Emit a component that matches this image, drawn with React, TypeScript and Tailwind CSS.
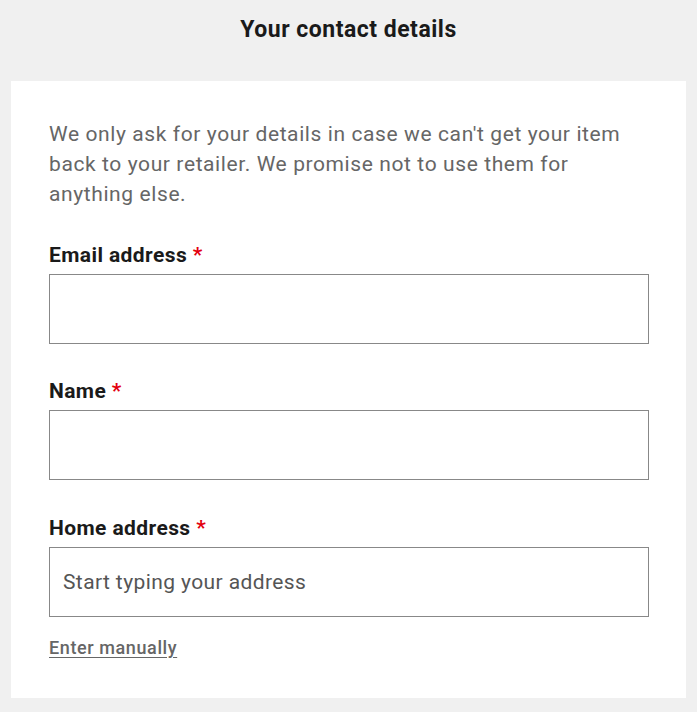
export default function App() {
  // contact form, three required fields
  const fields = [
    { label: "Email address", placeholder: "", gap: "mt-[31px]" },
    { label: "Name", placeholder: "", gap: "mt-[32px]" },
    { label: "Home address", placeholder: "Start typing your address", gap: "mt-[33px]" },
  ];

  return (
    <div
      className="min-h-screen bg-[#f0f0f0] px-[11px] pb-[14px]"
      style={{ fontFamily: "Roboto, 'Noto Sans', sans-serif" }}
    >
      <h1 className="h-[81px] pt-[16px] text-center text-[23px] font-bold leading-[28px] tracking-[0.5px] text-[#1a1a1a]">
        Your contact details
      </h1>
      <div className="bg-white pl-[38px] pr-[37px] pt-[38px] pb-[35px]">
        <p className="text-[21px] leading-[30px] tracking-[0.6px] text-[#666]">
          We only ask for your details in case we can't get your item back to
          your retailer. We promise not to use them for anything else.
        </p>
        {fields.map((f) => (
          <div key={f.label} className={f.gap}>
            <label className="mb-[4px] block text-[21px] font-bold leading-[30px] tracking-[0.4px] text-[#1a1a1a]">
              {f.label} <span className="text-[#e3000f]">*</span>
            </label>
            <input
              type="text"
              placeholder={f.placeholder}
              className="block h-[70px] w-full border border-[#888] px-[13px] text-[21px] tracking-[0.4px] text-[#333] outline-none placeholder:text-[#555]"
            />
          </div>
        ))}
        <a
          href="#"
          className="mt-[16px] inline-block text-[18px] font-medium leading-[30px] tracking-[0.6px] text-[#666] underline underline-offset-[3px]"
        >
          Enter manually
        </a>
      </div>
    </div>
  );
}
